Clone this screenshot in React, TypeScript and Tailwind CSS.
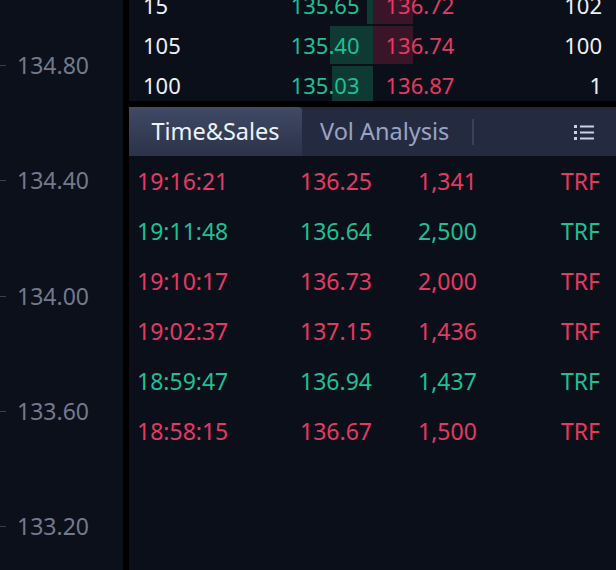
import React from "react";

const font = { fontFamily: '"Noto Sans", "Open Sans", sans-serif' };

const axisLabels = ["134.80", "134.40", "134.00", "133.60", "133.20"];

const book = [
  { bidQty: "15", bid: "135.65", ask: "136.72", askQty: "102", bidBar: 6, askBar: 40 },
  { bidQty: "105", bid: "135.40", ask: "136.74", askQty: "100", bidBar: 43, askBar: 40 },
  { bidQty: "100", bid: "135.03", ask: "136.87", askQty: "1", bidBar: 41, askBar: 0 },
];

const trades = [
  { time: "19:16:21", price: "136.25", size: "1,341", up: false },
  { time: "19:11:48", price: "136.64", size: "2,500", up: true },
  { time: "19:10:17", price: "136.73", size: "2,000", up: false },
  { time: "19:02:37", price: "137.15", size: "1,436", up: false },
  { time: "18:59:47", price: "136.94", size: "1,437", up: true },
  { time: "18:58:15", price: "136.67", size: "1,500", up: false },
];

function MenuIcon() {
  return (
    <svg width="22" height="16" viewBox="0 0 22 16" fill="#c9d1ec">
      <rect x="0" y="1" width="3" height="3" />
      <rect x="6" y="1.5" width="14" height="2" />
      <rect x="0" y="7" width="3" height="3" />
      <rect x="6" y="7.5" width="14" height="2" />
      <rect x="0" y="13" width="3" height="3" />
      <rect x="6" y="13.5" width="14" height="2" />
    </svg>
  );
}

export default function App() {
  return (
    <div className="flex h-[570px] w-[616px] gap-[6px] overflow-hidden bg-black" style={font}>
      {/* price axis */}
      <div className="flex w-[123px] shrink-0 flex-col bg-[#0c101b] pt-[8px]">
        {axisLabels.map((l) => (
          <div key={l} className="flex h-[115.3px] shrink-0 items-center">
            <div className="h-px w-[6px] bg-[#3a3f4c]" />
            <span className="ml-[11px] text-[23px] leading-none text-[#737a8b]">{l}</span>
          </div>
        ))}
      </div>

      <div className="flex flex-1 flex-col gap-[6px]">
        {/* order book */}
        <div className="h-[101px] shrink-0 overflow-hidden bg-[#0b0f1a]">
          <div className="-mt-[15px] flex flex-col">
            {book.map((r) => (
              <div key={r.bid} className="flex h-[40px] text-[22px] leading-none">
                <div className="relative flex flex-1 items-center justify-between pl-[14px] pr-[13px]">
                  <div
                    className="absolute bottom-[1px] right-0 top-[1px] bg-[#0f3a34]"
                    style={{ width: r.bidBar }}
                  />
                  <span className="relative text-[#eef1f6]">{r.bidQty}</span>
                  <span className="relative text-[#1fbf95]">{r.bid}</span>
                </div>
                <div className="relative flex flex-1 items-center justify-between pl-[13px] pr-[14px]">
                  <div
                    className="absolute bottom-[1px] left-0 top-[1px] bg-[#3a1528]"
                    style={{ width: r.askBar }}
                  />
                  <span className="relative text-[#e33a63]">{r.ask}</span>
                  <span className="relative text-[#eef1f6]">{r.askQty}</span>
                </div>
              </div>
            ))}
          </div>
        </div>

        {/* time & sales */}
        <div className="flex flex-1 flex-col bg-[#0b0f1a]">
          <div className="flex h-[49px] shrink-0 items-center bg-[#242b40]">
            <div className="flex h-full w-[173px] items-center justify-center rounded-tr-[4px] bg-gradient-to-b from-[#414a66] to-[#2b3249] text-[23.5px] text-[#eef1f7]">
              Time&amp;Sales
            </div>
            <div className="pl-[18px] text-[23.5px] text-[#9aa3c0]">Vol Analysis</div>
            <div className="ml-[23px] h-[26px] w-[2px] bg-[#3a4258]" />
            <div className="ml-auto mr-[20px] flex items-center">
              <MenuIcon />
            </div>
          </div>

          <div className="flex flex-col">
            {trades.map((t) => {
              const c = t.up ? "text-[#1fbf95]" : "text-[#e33a63]";
              return (
                <div
                  key={t.time}
                  className={`grid h-[50px] grid-cols-[163px_118px_1fr_auto] items-center pl-[8px] pr-[16px] text-[23px] leading-none ${c}`}
                >
                  <span>{t.time}</span>
                  <span>{t.price}</span>
                  <span>{t.size}</span>
                  <span>TRF</span>
                </div>
              );
            })}
          </div>
        </div>
      </div>
    </div>
  );
}
